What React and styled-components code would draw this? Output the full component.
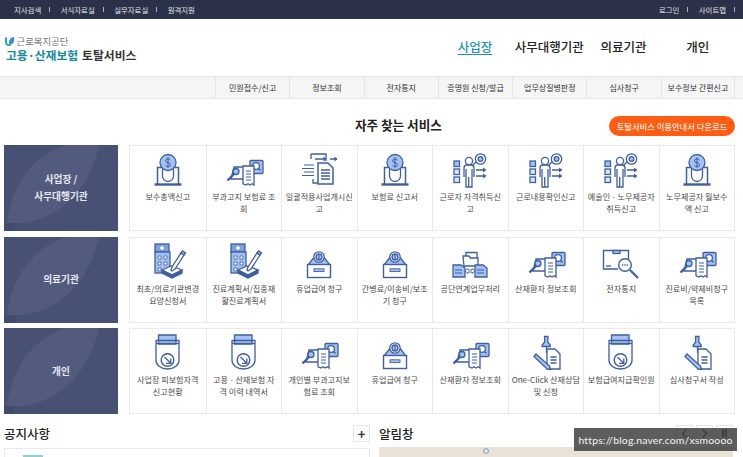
import React from "react";
import styled, { createGlobalStyle } from "styled-components";

const S = "#3f5f9d";
const F = "#a3c1f2";

const Global = createGlobalStyle`
  html, body { margin: 0; padding: 0; background: #fff; }
  body { width: 743px; height: 457px; overflow: hidden; font-family: "Noto Sans CJK KR", "Noto Sans", sans-serif; color: #333; }
  * { box-sizing: border-box; }
`;

const Page = styled.div`
  position: relative;
  width: 743px;
  height: 457px;
  overflow: hidden;
`;

const TopBar = styled.div`
  height: 19px;
  background: #2b3148;
  display: flex;
  align-items: center;
  justify-content: space-between;
  padding: 0 8px 0 14px;
  font-size: 7.4px;
  color: #e2e4ea;
`;
const TopGroup = styled.div`
  display: flex;
  align-items: center;
`;
const TopItem = styled.span`
  white-space: nowrap;
`;
const TopSep = styled.i`
  width: 1px;
  height: 5px;
  background: #aeb2bf;
  margin: 0 10.5px 0 8px;
  &:last-child { margin-right: 0; }
`;

const Header = styled.header`
  height: 57px;
  display: flex;
  align-items: flex-start;
  justify-content: space-between;
  padding: 0 8px 0 5px;
`;
const Logo = styled.div`
  padding-top: 15px;
  display: flex;
  flex-direction: column;
`;
const LogoTop = styled.div`
  display: flex;
  align-items: center;
  gap: 1.5px;
  height: 13px;
  font-size: 9.4px;
  color: #777;
`;
const LogoMain = styled.div`
  height: 16px;
  line-height: 16px;
  font-size: 11.8px;
  font-weight: 700;
  color: #333;
  padding-left: 1px;
  white-space: nowrap;
`;
const LogoAccent = styled.span`
  color: #15899b;
  margin-right: 4px;
`;
const MainNav = styled.nav`
  display: grid;
  grid-template-columns: repeat(4, 74.3px);
  padding-top: 18px;
`;
const MainLink = styled.a`
  text-align: center;
  font-size: 12.5px;
  font-weight: 500;
  line-height: 20px;
  white-space: nowrap;
  color: ${p => (p.$active ? "#1c93a8" : "#222")};
  text-decoration: ${p => (p.$active ? "underline" : "none")};
  text-underline-offset: 2px;
`;

const SubNav = styled.nav`
  height: 23px;
  background: #f5f5f5;
  border-top: 1px solid #e6e6e6;
  border-bottom: 1px solid #e6e6e6;
  display: grid;
  grid-template-columns: repeat(7, 74.3px);
  padding-left: 215px;
`;
const SubLink = styled.a`
  border-left: 1px solid #e4e4e4;
  display: flex;
  align-items: center;
  justify-content: center;
  font-size: 8px;
  color: #333;
  white-space: nowrap;
  &:last-child { border-right: 1px solid #e4e4e4; }
`;

const TitleRow = styled.div`
  height: 46px;
  display: flex;
  align-items: flex-start;
  padding: 17px 8px 0 355px;
  justify-content: space-between;
`;
const Title = styled.h2`
  margin: 0;
  font-size: 12.6px;
  line-height: 17px;
  font-weight: 700;
  color: #222;
`;
const GuideBtn = styled.a`
  width: 126px;
  height: 20px;
  border-radius: 10px;
  background: #ff5c14;
  color: #ffe9dc;
  font-size: 8.3px;
  font-weight: 500;
  display: flex;
  align-items: center;
  justify-content: center;
  white-space: nowrap;
`;

const Rows = styled.div`
  display: flex;
  flex-direction: column;
  gap: 5.5px;
  padding: 0 8px 0 4px;
`;
const Row = styled.section`
  height: 86px;
  display: grid;
  grid-template-columns: 114px 1fr;
  column-gap: 11px;
`;
const Panel = styled.div`
  position: relative;
  overflow: hidden;
  background: #475174;
  display: flex;
  align-items: center;
  justify-content: center;
`;
const PanelLeaf = styled.svg`
  position: absolute;
  inset: 0;
  width: 114px;
  height: 86px;
`;
const PanelText = styled.div`
  position: relative;
  text-align: center;
  color: #e6e8ef;
  font-size: 9.7px;
  font-weight: 700;
  line-height: 17px;
`;
const Grid = styled.div`
  display: grid;
  grid-template-columns: repeat(8, 1fr);
  border: 1px solid #e9e9e9;
`;
const Cell = styled.a`
  border-left: 1px solid #e9e9e9;
  &:first-child { border-left: 0; }
  display: flex;
  flex-direction: column;
  align-items: center;
  padding: 5px 3px 0;
  min-width: 0;
`;
const IconSvg = styled.svg`
  width: 40px;
  height: 38px;
  flex: none;
  fill: none;
  stroke: ${S};
  stroke-width: 1.3;
`;
const Label = styled.span`
  margin-top: 2px;
  font-size: 8.1px;
  line-height: 12px;
  color: #4a4a4a;
  text-align: center;
  word-break: break-all;
`;

const Bottom = styled.div`
  display: grid;
  grid-template-columns: 366px 354px;
  column-gap: 9px;
  padding: 11px 0 0 4px;
`;
const HeadRow = styled.div`
  height: 17px;
  display: flex;
  align-items: center;
  justify-content: space-between;
`;
const SectionTitle = styled.h3`
  margin: 0;
  font-size: 12.5px;
  font-weight: 500;
  color: #222;
  line-height: 17px;
`;
const PlusBtn = styled.span`
  width: 17px;
  height: 17px;
  border: 1px solid #e6e6e6;
  display: flex;
  align-items: center;
  justify-content: center;
  font-size: 13px;
  font-weight: 700;
  line-height: 1;
  color: #333;
`;
const Controls = styled.div`
  display: flex;
  gap: 3px;
`;
const Ctrl = styled.span`
  width: 17px;
  height: 17px;
  border: 1px solid #e4e4e4;
  display: flex;
  align-items: center;
  justify-content: center;
`;
const CtrlIcon = styled.svg`
  width: 9px;
  height: 11px;
  fill: none;
  stroke: #222;
  stroke-width: 1.2;
`;
const NoticeBox = styled.div`
  margin-top: 6px;
  height: 60px;
  border: 1px solid #e9e9e9;
  padding: 6px 0 0 18px;
`;
const NoticeTab = styled.div`
  width: 20px;
  height: 12px;
  background: #8fd0cc;
`;
const MapBox = styled.div`
  position: relative;
  margin-top: 5px;
  height: 60px;
  background: #e8e2d8;
`;
const MapPin = styled.i`
  position: absolute;
  left: 104px;
  top: 1px;
  width: 6px;
  height: 6px;
  border-radius: 50%;
  border: 1.5px solid #7fa0d4;
  background: #e8e2d8;
`;
const Watermark = styled.div`
  position: absolute;
  left: 574px;
  top: 428px;
  width: 163px;
  height: 23px;
  background: rgba(62, 62, 62, 0.84);
  color: #f4f4f4;
  font-family: "Lato", sans-serif;
  font-size: 10.4px;
  letter-spacing: 0.2px;
  display: flex;
  align-items: center;
  justify-content: center;
  white-space: nowrap;
`;
const LogoMark = styled.svg`
  width: 10px;
  height: 10px;
  flex: none;
`;

const Money = () => (
  <IconSvg viewBox="0 0 40 38">
    <path d="M9.500 33V16.500h21V33" strokeWidth="1.500" />
    <rect x="6.500" y="32.300" width="27" height="2.400" fill={S} stroke="none" />
    <path d="M14.500 18v7a5.500 5.500 0 0 0 11 0v-7" fill="#fff" />
    <circle cx="20" cy="11.500" r="8" fill={F} />
    <path d="M22.500 9.300c-.5-1-1.500-1.400-2.500-1.400-1.400 0-2.500.7-2.500 1.900 0 2.700 5 1.200 5 3.900 0 1.200-1.100 2-2.500 2-1.200 0-2.100-.5-2.600-1.400M20 6.300v10.400" strokeWidth="1" />
  </IconSvg>
);

const Review = () => (
  <IconSvg viewBox="0 0 40 38">
    <rect x="26" y="9.500" width="13" height="13" rx="1" fill={F} />
    <circle cx="32" cy="15" r="3.400" fill="#fff" />
    <path d="M34.500 17.500l2 2" strokeWidth="1.500" />
    <path d="M10 16h12l-2 12H7z" fill="#fff" />
    <path d="M19 15h11v19l-2-1.200-2 1.200-2-1.200-2 1.200-3-1.200z" fill="#fff" />
    <path d="M22 20h5M22 23h5M22 26h5M22 29h5" strokeWidth="1" />
    <circle cx="12" cy="20.500" r="3" fill={F} />
    <path d="M10 23l-6.500 6.500" strokeWidth="2.400" />
  </IconSvg>
);

const Docs = () => (
  <IconSvg viewBox="0 0 40 38">
    <path d="M12 3h15v7M12 3v5M19 32h-5v-4" />
    <path d="M5 14h10M3 17.500h12M5 21h10M3 24.500h12" strokeWidth="1.200" />
    <path d="M16 8h10M31 8h7" strokeWidth="1.300" />
    <path d="M24.500 5.500L27.500 8l-3 2.500zM35.500 5.500L38.500 8l-3 2.500z" fill={S} stroke="none" />
    <path d="M19 12h10l5 5v16H19z" fill="#fff" strokeWidth="1.500" />
    <path d="M22 19h9M22 22h9M22 25h9M22 28h9" strokeWidth="1.400" />
  </IconSvg>
);

const Person = () => (
  <IconSvg viewBox="0 0 40 38">
    <rect x="4" y="10" width="5.500" height="5.500" fill={F} />
    <rect x="4" y="18" width="5.500" height="5.500" fill="#dbe7fb" />
    <rect x="4" y="26" width="5.500" height="5.500" fill="#dbe7fb" />
    <circle cx="19" cy="10" r="3.600" />
    <path d="M14 26v-9a3 3 0 0 1 3-3h4a3 3 0 0 1 3 3v9M16 18v18h2.700V26M22 18v18h-3.300V26" />
    <path d="M22 15l4-4" />
    <circle cx="30.500" cy="8" r="5.200" fill="#fff" />
    <circle cx="30.500" cy="8" r="2.400" fill={F} />
    <path d="M26 19h9M26 25h9" />
    <path d="M33 16.500l3.500 2.500-3.500 2.500zM33 22.500l3.500 2.500-3.500 2.500z" fill={S} stroke="none" />
  </IconSvg>
);

const Building = () => (
  <IconSvg viewBox="0 0 40 38">
    <rect x="7" y="1" width="14" height="8" fill="#7f9fd6" />
    <path d="M12 5h4M14 3v4" stroke="#fff" />
    <rect x="7" y="9" width="15" height="21" fill={F} />
    <path d="M10 13h3v3h-3zM16 13h3v3h-3zM10 19h3v3h-3zM16 19h3v3h-3zM10 25h3v3h-3z" fill="#fff" strokeWidth="0.800" />
    <path d="M14 27l9-4 11 4-10 5z" fill="#fff" />
    <path d="M14 27v3l10 5 10-5v-3l-10 5z" fill={S} />
    <path d="M23 27l1-3L33 10l3 2-9 14-3 2z" fill="#fff" />
    <path d="M33 10l1.500-2 3 2-1.500 2z" fill={F} />
  </IconSvg>
);

const Box = () => (
  <IconSvg viewBox="0 0 40 38">
    <path d="M9 22l5.500-7h11l5.500 7z" fill={F} />
    <circle cx="20" cy="14" r="5.200" fill="#fff" />
    <circle cx="20" cy="14" r="3" fill={F} />
    <path d="M20 11.500v5" strokeWidth="1" />
    <rect x="8.500" y="21.500" width="23" height="13" fill="#fff" strokeWidth="1.400" />
    <rect x="15" y="25.800" width="10" height="2.800" fill={F} stroke={S} strokeWidth="0.900" />
  </IconSvg>
);

const Folders = () => (
  <IconSvg viewBox="0 0 40 38">
    <path d="M16 16V9.500h11V18" />
    <path d="M13 13h6l1.500 2H28v8H14z" fill="#fff" />
    <path d="M3 22h8l4 3v9H3z" fill={F} />
    <path d="M25 22h8l4 3v9H25z" fill={F} />
    <path d="M5 27h7M5 30h7M27 27h7M27 30h7" strokeWidth="1" />
    <path d="M15 28l3-2.500v1.500h4v-1.500l3 2.500-3 2.500V29h-4v1.500z" fill="#fff" strokeWidth="0.900" />
  </IconSvg>
);

const Mail = () => (
  <IconSvg viewBox="0 0 40 38">
    <path d="M17 26H2.500V7.500h25V16" strokeWidth="1.400" />
    <rect x="12" y="7.500" width="7" height="3" fill={F} />
    <path d="M5 23h5" />
    <circle cx="24" cy="22" r="6.300" fill="#fff" strokeWidth="1.400" />
    <path d="M21 22h6" strokeWidth="1.500" strokeDasharray="1 .7" />
    <path d="M29 27l8 8" strokeWidth="2.300" />
  </IconSvg>
);

const Clip = () => (
  <IconSvg viewBox="0 0 40 38">
    <path d="M10.500 1h17.500v9H10.500z" fill={F} />
    <path d="M8 6.500h23v20a11.500 8.500 0 0 1-23 0z" strokeWidth="1.300" />
    <path d="M8 9.500h23" />
    <circle cx="19.500" cy="26" r="6.300" fill="#fff" strokeWidth="1.400" />
    <path d="M16.500 23l6 6M22.800 24.500v4.800h-4.800" strokeWidth="1.300" />
  </IconSvg>
);

const Pin = () => (
  <IconSvg viewBox="0 0 40 38">
    <path d="M18.500 2.500h3.500l-.3 5.500 2.500 3v1.500h-8V11l2.500-3z" fill={F} />
    <path d="M20.500 12.500V19" />
    <path d="M21 15h8l5 5v15H21z" fill="#fff" />
    <path d="M24.500 23h6M24.500 26h6M24.500 29h6" />
    <path d="M10 20l-2 2.500L21 35l3.500 .5-1-3.500z" fill={F} />
  </IconSvg>
);

const groups = [
  {
    title: ["사업장 /", "사무대행기관"],
    items: [
      [Money, "보수총액신고"],
      [Review, "부과고지 보험료 조회"],
      [Docs, "일괄적용사업개시신고"],
      [Money, "보험료 신고서"],
      [Person, "근로자 자격취득신고"],
      [Person, "근로내용확인신고"],
      [Person, "예술인ㆍ노무제공자 취득신고"],
      [Money, "노무제공자 월보수액 신고"],
    ],
  },
  {
    title: ["의료기관"],
    items: [
      [Building, "최초/의료기관변경 요양신청서"],
      [Building, "진료계획서/집중재활진료계획서"],
      [Box, "휴업급여 청구"],
      [Box, "간병료/이송비/보조기 청구"],
      [Folders, "공단연계업무처리"],
      [Review, "산재환자 정보조회"],
      [Mail, "전자통지"],
      [Review, "진료비/약제비청구 목록"],
    ],
  },
  {
    title: ["개인"],
    items: [
      [Clip, "사업장 피보험자격 신고현황"],
      [Clip, "고용ㆍ산재보험 자격 이력 내역서"],
      [Review, "개인별 부과고지보험료 조회"],
      [Box, "휴업급여 청구"],
      [Review, "산재환자 정보조회"],
      [Pin, "One-Click 산재상담 및 신청"],
      [Clip, "보험급여지급확인원"],
      [Pin, "심사청구서 작성"],
    ],
  },
];

const subLinks = ["민원접수/신고", "정보조회", "전자통지", "증명원 신청/발급", "업무상질병판정", "심사청구", "보수정보 간편신고"];

export default function App() {
  return (
    <Page>
      <Global />
      <TopBar>
        <TopGroup>
          <TopItem>지사검색</TopItem><TopSep />
          <TopItem>서식자료실</TopItem><TopSep />
          <TopItem>실무자료실</TopItem><TopSep />
          <TopItem>원격지원</TopItem>
        </TopGroup>
        <TopGroup>
          <TopItem>로그인</TopItem><TopSep />
          <TopItem>사이트맵</TopItem><TopSep />
        </TopGroup>
      </TopBar>
      <Header>
        <Logo>
          <LogoTop>
            <LogoMark viewBox="0 0 10 10">
              <path d="M1 1.500v4.500a3 3 0 0 0 4.500 2.800" fill="none" stroke="#2aa7b8" strokeWidth="2" />
              <path d="M4 6.500c0-3.200 1.800-5 5-5.500.7 3.500-.2 7.500-4.500 8z" fill="#3b8fd0" />
            </LogoMark>
            근로복지공단
          </LogoTop>
          <LogoMain><LogoAccent>고용·산재보험</LogoAccent>토탈서비스</LogoMain>
        </Logo>
        <MainNav>
          <MainLink $active>사업장</MainLink>
          <MainLink>사무대행기관</MainLink>
          <MainLink>의료기관</MainLink>
          <MainLink>개인</MainLink>
        </MainNav>
      </Header>
      <SubNav>
        {subLinks.map(s => <SubLink key={s}>{s}</SubLink>)}
      </SubNav>
      <TitleRow>
        <Title>자주 찾는 서비스</Title>
        <GuideBtn>토탈서비스 이용안내서 다운로드</GuideBtn>
      </TitleRow>
      <Rows>
        {groups.map(g => (
          <Row key={g.title[0]}>
            <Panel>
              <PanelLeaf viewBox="0 0 114 86">
                <path d="M95 0H62C30 10 8 38 3 78c45 4 82-30 92-78z" fill="#525b7d" />
                <path d="M0 78h11v8H0z" fill="#414c6d" />
              </PanelLeaf>
              <PanelText>
                {g.title.map(t => <div key={t}>{t}</div>)}
              </PanelText>
            </Panel>
            <Grid>
              {g.items.map(([Icon, text], i) => (
                <Cell key={i}>
                  <Icon />
                  <Label>{text}</Label>
                </Cell>
              ))}
            </Grid>
          </Row>
        ))}
      </Rows>
      <Bottom>
        <div>
          <HeadRow>
            <SectionTitle>공지사항</SectionTitle>
            <PlusBtn>+</PlusBtn>
          </HeadRow>
          <NoticeBox><NoticeTab /></NoticeBox>
        </div>
        <div>
          <HeadRow>
            <SectionTitle>알림창</SectionTitle>
            <Controls>
              <Ctrl><CtrlIcon viewBox="0 0 9 11"><path d="M6.500 1.500L2.500 5.500l4 4" /></CtrlIcon></Ctrl>
              <Ctrl><CtrlIcon viewBox="0 0 9 11"><path d="M2.500 1.500l4 4-4 4" /></CtrlIcon></Ctrl>
              <Ctrl><CtrlIcon viewBox="0 0 9 11"><path d="M3 1.500v8M6 1.500v8" strokeWidth="1.800" /></CtrlIcon></Ctrl>
            </Controls>
          </HeadRow>
          <MapBox><MapPin /></MapBox>
        </div>
      </Bottom>
      <Watermark>https://blog.naver.com/xsmoooo</Watermark>
    </Page>
  );
}
